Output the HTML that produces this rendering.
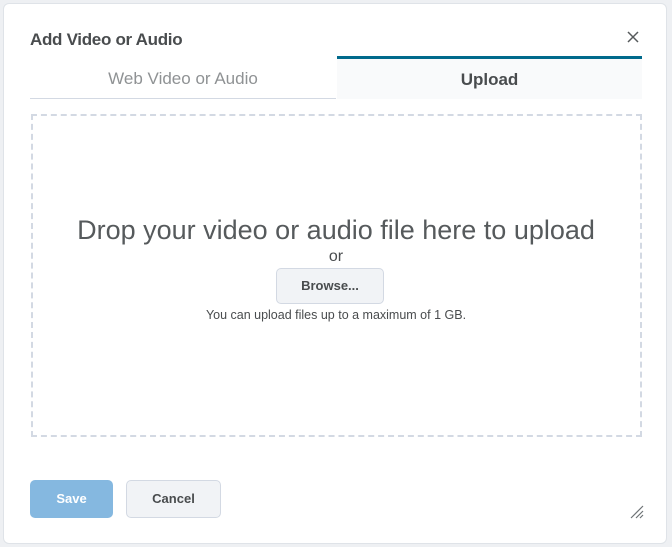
<!DOCTYPE html>
<html><head><style>
body{margin:0;width:672px;height:547px;background:#eef0f3;font-family:"Liberation Sans",sans-serif;position:relative;overflow:hidden;color:#494c4e}
.dlg{position:absolute;left:3px;top:3px;width:664px;height:541px;background:#fff;border-radius:6px;border:1px solid #dfe3e8;box-sizing:border-box}
.t{position:absolute;left:30px;top:30px;font-size:17px;font-weight:bold;color:#494c4e;letter-spacing:-0.3px}
.x{position:absolute;left:626px;top:30px}
.tab1{position:absolute;left:30px;top:56px;width:306px;height:43px;border-bottom:1px solid #d3d9e3;box-sizing:border-box;text-align:center;line-height:46px;font-size:17px;color:#8f9294}
.tab2{position:absolute;left:337px;top:56px;width:305px;height:43px;border-top:3px solid #006a8c;background:#f9fafb;box-sizing:border-box;text-align:center;line-height:42px;font-size:17px;font-weight:bold;color:#494c4e}
.drop{position:absolute;left:31px;top:114px;width:611px;height:323px;border:2px dashed #d3d9e3;box-sizing:border-box}
.h{position:absolute;left:0;width:672px;top:215px;text-align:center;font-size:27px;color:#565a5c}
.or{position:absolute;left:0;width:672px;top:248px;text-align:center;font-size:16px;color:#494c4e}
.br{position:absolute;left:276px;top:268px;width:108px;height:36px;background:#f1f3f6;border:1px solid #d3d9e3;border-radius:5px;box-sizing:border-box;text-align:center;line-height:34px;font-size:13px;font-weight:bold;color:#494c4e}
.note{position:absolute;left:0;width:672px;top:308px;text-align:center;font-size:12.5px;color:#494c4e}
.save{position:absolute;left:30px;top:480px;width:83px;height:38px;background:#85b8e0;border-radius:5px;color:#fff;font-weight:bold;font-size:13px;text-align:center;line-height:38px}
.cancel{position:absolute;left:126px;top:480px;width:95px;height:38px;background:#f1f3f6;border:1px solid #d3d9e3;border-radius:5px;box-sizing:border-box;color:#494c4e;font-weight:bold;font-size:13px;text-align:center;line-height:36px}
</style></head><body>
<div class="dlg"></div>
<div class="t">Add Video or Audio</div>
<svg class="x" width="14" height="14"><path d="M2 2L12 12M12 2L2 12" stroke="#565a5c" stroke-width="1.5"/></svg>
<div class="tab1">Web Video or Audio</div>
<div class="tab2">Upload</div>
<div class="drop"></div>
<div class="h">Drop your video or audio file here to upload</div>
<div class="or">or</div>
<div class="br">Browse...</div>
<div class="note">You can upload files up to a maximum of 1 GB.</div>
<div class="save">Save</div>
<div class="cancel">Cancel</div>
<svg style="position:absolute;left:630px;top:505px" width="14" height="14"><path d="M1 13L13 1M6 13L13 6M10 13L13 10" stroke="#6e7376" stroke-width="1.2"/></svg>
</body></html>
